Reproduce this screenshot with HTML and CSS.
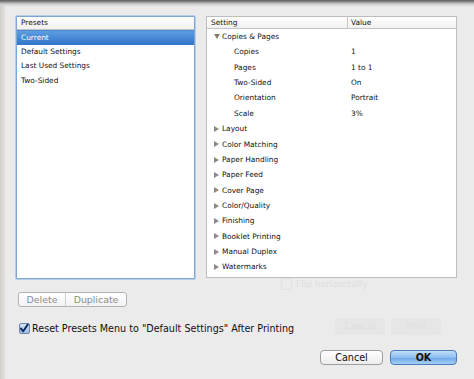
FILE: index.html
```html
<!DOCTYPE html>
<html lang="en">
<head>
    <meta charset="UTF-8">
    <meta name="viewport" content="width=device-width, initial-scale=1.0">
    <title>Presets</title>
    <link rel="stylesheet" href="styles.css">
</head>
<body>
    <div class="window">
        <!-- faded controls of the sheet behind -->
        <div class="ghost">
            <div class="ghost-flip"><span class="ghost-box"></span>Flip horizontally</div>
            <div class="ghost-buttons"><span>Cancel</span><span>Print</span></div>
        </div>

        <div class="panes">
            <!-- presets list -->
            <div class="presets">
                <div class="list-head">Presets</div>
                <ul class="preset-list">
                    <li class="selected">Current</li>
                    <li>Default Settings</li>
                    <li>Last Used Settings</li>
                    <li>Two-Sided</li>
                </ul>
            </div>

            <!-- settings table -->
            <div class="settings">
                <div class="table-head">
                    <div class="col-setting">Setting</div>
                    <div class="col-value">Value</div>
                </div>
                <div class="row"><div class="col-setting"><span class="tri open"></span>Copies &amp; Pages</div></div>
                <div class="row"><div class="col-setting child">Copies</div><div class="col-value">1</div></div>
                <div class="row"><div class="col-setting child">Pages</div><div class="col-value">1 to 1</div></div>
                <div class="row"><div class="col-setting child">Two-Sided</div><div class="col-value">On</div></div>
                <div class="row"><div class="col-setting child">Orientation</div><div class="col-value">Portrait</div></div>
                <div class="row"><div class="col-setting child">Scale</div><div class="col-value">3%</div></div>
                <div class="row"><div class="col-setting"><span class="tri"></span>Layout</div></div>
                <div class="row"><div class="col-setting"><span class="tri"></span>Color Matching</div></div>
                <div class="row"><div class="col-setting"><span class="tri"></span>Paper Handling</div></div>
                <div class="row"><div class="col-setting"><span class="tri"></span>Paper Feed</div></div>
                <div class="row"><div class="col-setting"><span class="tri"></span>Cover Page</div></div>
                <div class="row"><div class="col-setting"><span class="tri"></span>Color/Quality</div></div>
                <div class="row"><div class="col-setting"><span class="tri"></span>Finishing</div></div>
                <div class="row"><div class="col-setting"><span class="tri"></span>Booklet Printing</div></div>
                <div class="row"><div class="col-setting"><span class="tri"></span>Manual Duplex</div></div>
                <div class="row"><div class="col-setting"><span class="tri"></span>Watermarks</div></div>
            </div>
        </div>

        <!-- delete / duplicate -->
        <div class="segmented">
            <span class="seg-delete">Delete</span>
            <span class="seg-duplicate">Duplicate</span>
        </div>

        <!-- reset option -->
        <label class="reset">
            <span class="check">
                <svg width="11" height="11" viewBox="0 0 11 11"><path d="M2.2 5.6 L4.6 8.6 L9.6 1.2" fill="none" stroke="#102a5c" stroke-width="2.1" stroke-linecap="round" stroke-linejoin="round"/></svg>
            </span>
            Reset Presets Menu to "Default Settings" After Printing
        </label>

        <!-- dialog buttons -->
        <div class="actions">
            <button class="btn-cancel">Cancel</button>
            <button class="btn-ok">OK</button>
        </div>
    </div>
</body>
</html>
```

FILE: styles.css
```css
html, body {
    margin: 0;
    padding: 0;
    width: 474px;
    height: 379px;
    overflow: hidden;
}

body {
    font-family: "DejaVu Sans", sans-serif;
    color: #111;
    background:
        linear-gradient(#5c5c5c 0, #8f8f8f 2px, #cfcfcf 4px, rgba(236, 236, 236, 0) 7px),
        linear-gradient(to right, #d2cfca 0, #dedcd8 4px, #ebebeb 6px);
    background-color: #ececec;
}

.window {
    position: relative;
    height: 379px;
    padding: 16px 17px 0 16px;
    box-sizing: border-box;
}

/* faded sheet behind */
.ghost {
    position: absolute;
    left: 0;
    top: 0;
    width: 474px;
    height: 379px;
    color: #dedede;
    font-size: 9px;
}

.ghost-flip {
    position: absolute;
    left: 281px;
    top: 278px;
    display: flex;
    align-items: center;
    gap: 4px;
}

.ghost-box {
    width: 9px;
    height: 10px;
    border: 1px solid #e2e2e2;
    border-radius: 2px;
}

.ghost-buttons {
    position: absolute;
    left: 335px;
    top: 318px;
    display: flex;
    gap: 6px;
}

.ghost-buttons span {
    width: 50px;
    height: 17px;
    line-height: 17px;
    text-align: center;
    background: #e6e6e6;
    border-radius: 3px;
}

.panes {
    position: relative;
    display: flex;
    gap: 11px;
}

/* presets list */
.presets {
    width: 179px;
    height: 263px;
    box-sizing: border-box;
    background: #fff;
    border: 1px solid #7ea6d4;
    box-shadow: 0 0 0 1px rgba(140, 180, 225, 0.55);
    border-radius: 1px;
    font-size: 7.4px;
}

.list-head {
    height: 12px;
    line-height: 12px;
    padding-left: 4px;
    border-bottom: 1px solid #c4c4c4;
    background: linear-gradient(#ffffff, #f1f1f1);
}

.preset-list {
    list-style: none;
    margin: 0;
    padding: 0;
}

.preset-list li {
    height: 14.6px;
    line-height: 14.6px;
    padding-left: 4px;
}

.preset-list li.selected {
    color: #fff;
    background: linear-gradient(#5d9de0, #2f74c8);
    border-top: 1px solid #4b8bd3;
    height: 13.6px;
    line-height: 13.6px;
}

/* settings table */
.settings {
    width: 251px;
    height: 262px;
    box-sizing: border-box;
    background: #fff;
    border: 1px solid #bdbdbd;
    font-size: 7.4px;
}

.table-head {
    display: flex;
    height: 11px;
    line-height: 11px;
    border-bottom: 1px solid #c4c4c4;
    background: linear-gradient(#ffffff, #f1f1f1);
}

.table-head .col-setting {
    border-right: 1px solid #c8c8c8;
    padding-left: 4px;
    box-sizing: border-box;
}

.table-head .col-value {
    padding-left: 3px;
}

.row {
    display: flex;
    height: 15.37px;
    line-height: 15.37px;
}

.col-setting {
    width: 141px;
    display: flex;
    align-items: center;
    padding-left: 7px;
    box-sizing: border-box;
}

.col-setting.child {
    padding-left: 27px;
}

.col-value {
    padding-left: 3px;
}

.tri {
    width: 0;
    height: 0;
    margin-right: 3px;
    border-top: 3px solid transparent;
    border-bottom: 3px solid transparent;
    border-left: 5px solid #8a8a8a;
}

.tri.open {
    border-left: 3px solid transparent;
    border-right: 3px solid transparent;
    border-top: 5px solid #7c7c7c;
    border-bottom: 0;
    margin-right: 2px;
}

/* delete / duplicate */
.segmented {
    position: relative;
    display: flex;
    width: 109px;
    height: 15px;
    margin: 13px 0 0 2px;
    box-sizing: border-box;
    border: 1px solid #b3b3b3;
    border-radius: 3px;
    background: linear-gradient(#ffffff, #f2f2f2);
    color: #8c8c8c;
    font-size: 9.4px;
    line-height: 13px;
}

.seg-delete {
    width: 46px;
    text-align: center;
    border-right: 1px solid #d0d0d0;
}

.seg-duplicate {
    flex: 1;
    text-align: center;
}

/* reset checkbox */
.reset {
    position: relative;
    display: flex;
    align-items: center;
    gap: 2px;
    margin: 15px 0 0 3px;
    height: 13px;
    font-size: 9.6px;
    color: #111;
}

.check {
    width: 11px;
    height: 11px;
    box-sizing: border-box;
    border: 1px solid #6f86a8;
    border-radius: 2px;
    background: linear-gradient(#d5e4f5, #9dbde3);
    display: flex;
}

.check svg {
    margin: -1px 0 0 -1px;
}

/* dialog buttons */
.actions {
    position: relative;
    display: flex;
    justify-content: flex-end;
    gap: 7px;
    margin-top: 15px;
    padding-right: 0;
}

.actions button {
    height: 15px;
    padding: 0;
    font-family: "DejaVu Sans", sans-serif;
    font-size: 9.6px;
    color: #111;
    border-radius: 4px;
    line-height: 13px;
}

.btn-cancel {
    width: 63px;
    border: 1px solid #9e9e9e;
    background: linear-gradient(#ffffff, #ececec);
}

.btn-ok {
    width: 67px;
    border: 1px solid #4a7cbc;
    background: linear-gradient(#c3def7 0, #8dbdee 50%, #6aa7e8 51%, #a6d0f6 100%);
    font-weight: bold;
}
```
